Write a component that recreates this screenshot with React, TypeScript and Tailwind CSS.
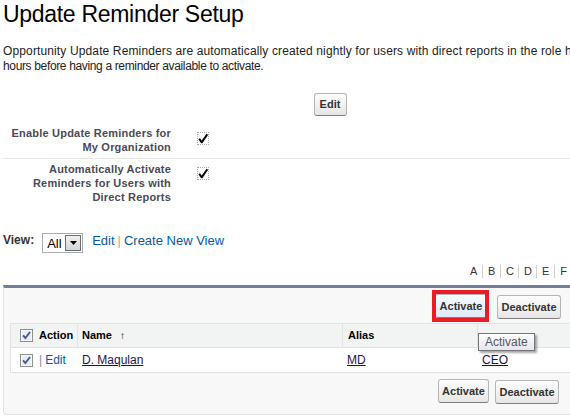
const font = "font-['Liberation_Sans',Arial,sans-serif]";

function TickMark() {
  return (
    <span className="inline-flex w-[12px] h-[13px] border border-dotted border-[#a8a8a8] items-center justify-center">
      <svg width="11" height="11" viewBox="0 0 11 11">
        <path d="M1.3 5.8 L4.1 9.7 L10.3 0.8" fill="none" stroke="#000" strokeWidth="2.2" strokeLinejoin="round" />
      </svg>
    </span>
  );
}

function CheckBox() {
  return (
    <svg width="13" height="13" viewBox="0 0 13 13" className="shrink-0">
      <rect x="0.5" y="0.5" width="12" height="12" fill="#dfe3ec" stroke="#8e8f8f" />
      <rect x="1.5" y="1.5" width="10" height="10" fill="#e9ecf3" stroke="#f7f8fb" />
      <path d="M3 6.3 L5.4 9 L10 3" fill="none" stroke="#4b5a8c" strokeWidth="1.9" />
    </svg>
  );
}

function Btn({ label, w, hover = false }: { label: string; w: string; hover?: boolean }) {
  return (
    <button
      className={`${w} h-[24px] rounded-[3px] border border-[#b5b5b5] border-b-[#7f7f7f] text-[11px] font-bold text-[#333] text-center ${
        hover ? 'bg-gradient-to-b from-[#f6fbff] to-[#dcebf8]' : 'bg-gradient-to-b from-[#fdfdfd] to-[#e6e6e6]'
      }`}
    >
      {label}
    </button>
  );
}

export default function App() {
  const letters = ['A', 'B', 'C', 'D', 'E', 'F', 'G'];

  return (
    <div className={`w-[570px] h-[416px] overflow-hidden bg-white ${font}`}>
      <div className="w-[720px]">
        <h1 className="pl-[3px] text-[23px] leading-[28px] tracking-[-0.3px] text-black font-normal">Update Reminder Setup</h1>

        <p className="mt-[16px] pl-[3px] text-[12px] leading-[15px] text-[#222] whitespace-nowrap">
          <span className="tracking-[0.13px]">
            Opportunity Update Reminders are automatically created nightly for users with direct reports in the role hierarchy. New users must wait 24
          </span>
          <br />
          <span className="tracking-[-0.35px]">hours before having a reminder available to activate.</span>
        </p>

        <div className="mt-[19px] w-[660px] flex justify-center">
          <button className="w-[33px] h-[23px] rounded-[3px] border border-[#b5b5b5] border-b-[#7f7f7f] bg-gradient-to-b from-[#fdfdfd] to-[#e6e6e6] text-[11px] font-bold text-[#333]">
            Edit
          </button>
        </div>

        <div className="mt-[10px] ml-[3px]">
          <div className="flex border-b border-[#e6e6e6] pb-[4px]">
            <div className="w-[168px] text-right text-[11px] leading-[14px] tracking-[0.2px] font-bold text-[#4a4a56] whitespace-nowrap">
              Enable Update Reminders for
              <br />
              My Organization
            </div>
            <div className="ml-[26px] pt-[1px]">
              <TickMark />
            </div>
          </div>
          <div className="flex pt-[3px]">
            <div className="w-[168px] text-right text-[11px] leading-[14px] tracking-[0.2px] font-bold text-[#4a4a56] whitespace-nowrap">
              Automatically Activate
              <br />
              Reminders for Users with
              <br />
              Direct Reports
            </div>
            <div className="ml-[26px]">
              <TickMark />
            </div>
          </div>
        </div>

        <div className="mt-[29px] ml-[3px] flex items-start">
          <span className="text-[12px] leading-[15px] font-bold text-[#333]">View:</span>
          <div className="ml-[8px] w-[41px] h-[20px] border border-[#a5acb2] bg-white flex items-center justify-between pl-[4px] pr-[1px]">
            <span className="text-[13px] leading-[16px] text-black pt-[2px]">All</span>
            <span className="w-[16px] h-[16px] border border-[#6f6f6f] bg-gradient-to-b from-[#f0f0f0] to-[#d6d6d6] flex items-center justify-center">
              <svg width="7" height="4" viewBox="0 0 7 4">
                <path d="M0 0 H7 L3.5 4 Z" fill="#000" />
              </svg>
            </span>
          </div>
          <div className="ml-[9px] text-[13px] leading-[16px] text-[#015ba7] flex">
            <span>Edit</span>
            <span className="mx-[3px] text-[#d2a86b]">|</span>
            <span>Create New View</span>
          </div>
        </div>

        <div className="mt-[11px] ml-[470px] flex text-[11px] leading-[14px] text-[#333]">
          {letters.map((l, i) => (
            <div key={l} className="flex items-center">
              {i > 0 && <span className="w-px h-[13px] bg-[#cfcfcf] mx-[5px]" />}
              <span className="w-[7px] text-center">{l}</span>
            </div>
          ))}
        </div>

        <div className="relative mt-[7px] ml-[3px] h-[130px] border-t-[3px] border-t-[#747e96] border-l border-b border-[#e0e3e5] rounded-b-[4px] bg-[#f8f8f8]">
          <div className="h-[35px] flex items-start pt-[6px] pl-[431px]">
            <Btn label="Activate" w="w-[52px]" hover />
            <div className="ml-[10px]">
              <Btn label="Deactivate" w="w-[64px]" />
            </div>
          </div>

          <div className="ml-[6px] border border-[#e0e3e5] bg-white text-[11px]">
            <div className="grid grid-cols-[67px_265px_135px_1fr] h-[24px] bg-[#f2f3f3] border-b border-[#e0e3e5] font-bold text-black">
              <div className="flex items-center pl-[9px] gap-[6px] border-r border-[#e0e3e5]">
                <CheckBox />
                <span>Action</span>
              </div>
              <div className="flex items-center pl-[4px] border-r border-[#e0e3e5]">
                <span>Name</span>
                <span className="ml-[8px] text-[10px] font-normal">↑</span>
              </div>
              <div className="flex items-center pl-[5px] border-r border-[#e0e3e5]">Alias</div>
              <div />
            </div>
            <div className="grid grid-cols-[67px_265px_135px_1fr] h-[24px] text-[12px] items-center">
              <div className="flex items-center pl-[9px]">
                <CheckBox />
                <span className="ml-[6px] text-[#8a8a8a]">|</span>
                <span className="ml-[3px] text-[#015ba7]">Edit</span>
              </div>
              <div className="pl-[4px]">
                <span className="underline text-[#1e1450]">D. Maqulan</span>
              </div>
              <div className="pl-[4px]">
                <span className="underline text-[#1e1450]">MD</span>
              </div>
              <div className="pl-[4px]">
                <span className="underline text-[#1e1450]">CEO</span>
              </div>
            </div>
          </div>

          <div className="mt-[6px] flex pl-[434px]">
            <Btn label="Activate" w="w-[51px]" />
            <div className="ml-[6px]">
              <Btn label="Deactivate" w="w-[64px]" />
            </div>
          </div>

          <div className="absolute left-[428px] top-[2px] w-[57px] h-[32px] border-4 border-[#ed1c24]" />

          <div className="absolute left-[474px] top-[45px] h-[18px] px-[6px] border border-[#767676] bg-gradient-to-b from-white to-[#e4e5f0] text-[12px] leading-[16px] text-[#575757] shadow-[2px_2px_2px_rgba(0,0,0,0.35)]">
            Activate
          </div>
        </div>
      </div>
    </div>
  );
}
